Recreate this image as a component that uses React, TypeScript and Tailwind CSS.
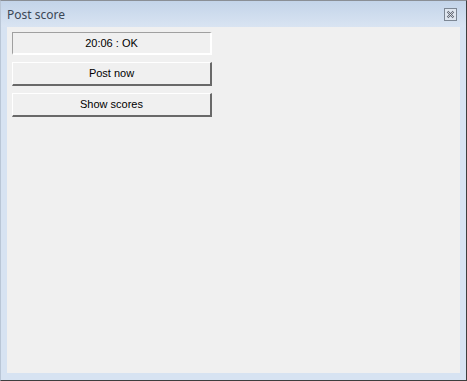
export default function App() {
  return (
    <div className="w-[467px] h-[381px] flex flex-col bg-[#d7e3f2] border-t border-t-[#8a8f96] border-r border-r-[#3e3e3e] border-b border-b-[#3e3e3e] border-l border-l-[#b9c6d6] font-['Liberation_Sans',Arial,sans-serif]">
      <div className="h-[26px] shrink-0 flex items-center justify-between pl-[6px] pr-[9px] bg-gradient-to-b from-[#c3d4e9] to-[#d9e4f2]">
        <span className="text-[12px] text-[#3b4756] font-['Noto_Sans',sans-serif] leading-none pt-[1px]">Post score</span>
        <div className="w-[13px] h-[13px] border border-[#7d8794] bg-[#dfe6ef] flex items-center justify-center">
          <svg width="9" height="9" viewBox="0 0 9 9">
            <path d="M1.5 1.5 L7.5 7.5 M7.5 1.5 L1.5 7.5" stroke="#5a6270" strokeWidth="2" fill="none" />
            <path d="M1.5 1.5 L7.5 7.5 M7.5 1.5 L1.5 7.5" stroke="#ffffff" strokeWidth="0.7" fill="none" />
          </svg>
        </div>
      </div>
      <div className="flex-1 flex px-[6px] pb-[7px]">
        <div className="flex-1 bg-[#f0f0f0] pl-[5px] pt-[5px] flex flex-col gap-[7px]">
          <div className="w-[200px] h-[23px] border-t border-l border-t-[#a0a0a0] border-l-[#a0a0a0] border-b-2 border-r-2 border-b-white border-r-white flex items-center justify-center text-[11px] text-black">
            20:06 : OK
          </div>
          <button className="w-[200px] h-[24px] border-t border-l border-t-white border-l-white border-b-2 border-r-2 border-b-[#696969] border-r-[#696969] bg-[#f0f0f0] text-[11px] text-black flex items-center justify-center">
            Post now
          </button>
          <button className="w-[200px] h-[24px] border-t border-l border-t-white border-l-white border-b-2 border-r-2 border-b-[#696969] border-r-[#696969] bg-[#f0f0f0] text-[11px] text-black flex items-center justify-center">
            Show scores
          </button>
        </div>
      </div>
    </div>
  );
}
